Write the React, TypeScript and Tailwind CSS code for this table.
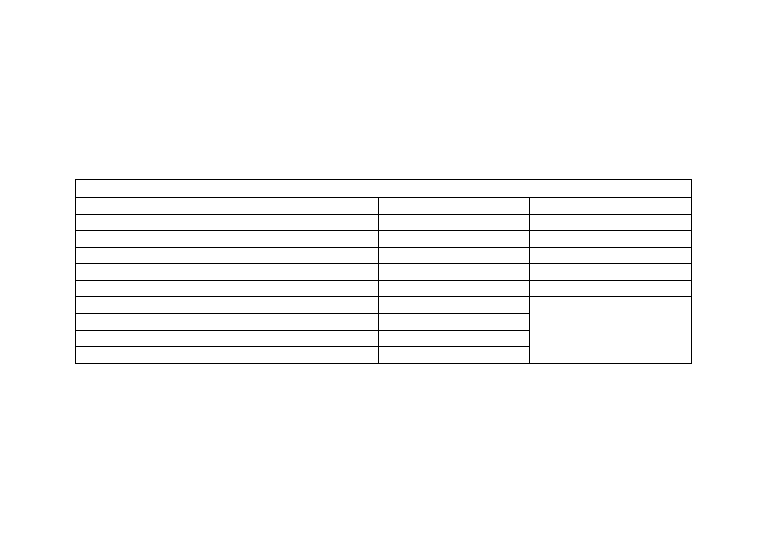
export default function App() {
  const rows = [17, 16, 17, 16, 17, 16, 17, 17, 16, 17];
  return (
    <div className="w-[768px] h-[543px] bg-white pt-[179px] pl-[75px]">
      <table className="table-fixed border-collapse w-[616px] font-['Liberation_Sans',sans-serif] text-[10px]">
        <colgroup>
          <col className="w-[303px]" />
          <col className="w-[151px]" />
          <col className="w-[162px]" />
        </colgroup>
        <tbody>
          <tr className="h-[18px]">
            <td colSpan={3} className="border border-black p-0"></td>
          </tr>
          {rows.map((h, i) => (
            <tr key={i} style={{ height: h }}>
              <td className="border border-black p-0"></td>
              <td className="border border-black p-0"></td>
              {i < 6 ? (
                <td className="border border-black p-0"></td>
              ) : i === 6 ? (
                <td rowSpan={4} className="border border-black p-0"></td>
              ) : null}
            </tr>
          ))}
        </tbody>
      </table>
    </div>
  );
}
